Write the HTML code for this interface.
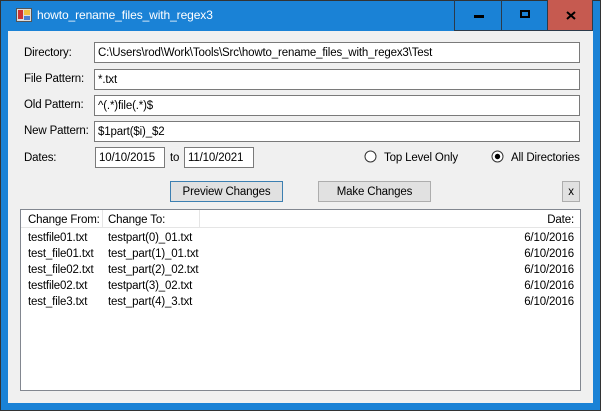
<!DOCTYPE html>
<html><head><style>
*{margin:0;padding:0;box-sizing:border-box}
body{width:601px;height:411px;background:#1a82d6;font-family:"Liberation Sans",Arial,sans-serif;font-size:11.5px;letter-spacing:-0.15px;color:#000;position:relative;overflow:hidden}
.frame{position:absolute;left:0;top:0;width:601px;height:411px;border:1px solid #333;}
.client{position:absolute;left:8px;top:31px;width:585px;height:372px;background:#f0f0f0}
.title{position:absolute;left:37px;top:8px;color:#fff;font-size:12px;letter-spacing:-0.1px}
.btn{position:absolute;top:0;height:31px;border:1px solid #2b3a4a;border-top:none}
.lbl{position:absolute;font-size:11.5px}
.tb{position:absolute;background:#fff;border:1px solid #7a7a7a;height:21px;padding:3px 3px 1px;font-size:11.5px;line-height:15px;white-space:nowrap}
.pb{position:absolute;height:21px;background:#e1e1e1;border:1px solid #adadad;text-align:center;line-height:20px}
.lv{position:absolute;left:20px;top:209px;width:561px;height:182px;background:#fff;border:1px solid #828790}
.row{position:absolute;left:7px;right:6px;height:17px;line-height:18px}
.row span{position:absolute}
</style></head><body>
<div class="frame"></div>
<svg style="position:absolute;left:16px;top:8px" width="16" height="14"><rect x="0.5" y="0.5" width="15" height="13" fill="#ddd" stroke="#555"/><rect x="2" y="2" width="5" height="9" fill="#c33"/><rect x="8" y="2" width="6" height="5" fill="#f0c040"/><rect x="8" y="8" width="6" height="4" fill="#4a7fd0"/></svg>
<div class="title">howto_rename_files_with_regex3</div>
<div class="btn" style="left:454px;width:48px"><div style="position:absolute;left:19px;top:15px;width:10px;height:3px;background:#000"></div></div>
<div class="btn" style="left:501px;width:47px"><div style="position:absolute;left:18px;top:10px;width:10px;height:8px;border:2px solid #000"></div></div>
<div class="btn" style="left:547px;width:46px;background:#c65a50"><svg style="position:absolute;left:18px;top:11px" width="10" height="9"><path d="M1 1L9 8M9 1L1 8" stroke="#000" stroke-width="2"/></svg></div>
<div class="client"></div>
<div class="lbl" style="left:24px;top:47px">Directory:</div>
<div class="tb" style="left:94px;top:42px;width:486px">C:\Users\rod\Work\Tools\Src\howto_rename_files_with_regex3\Test</div>
<div class="lbl" style="left:24px;top:73px">File Pattern:</div>
<div class="tb" style="left:94px;top:69px;width:486px">*.txt</div>
<div class="lbl" style="left:24px;top:99px">Old Pattern:</div>
<div class="tb" style="left:94px;top:95px;width:486px">^(.*)file(.*)$</div>
<div class="lbl" style="left:24px;top:125px">New Pattern:</div>
<div class="tb" style="left:94px;top:121px;width:486px">$1part($i)_$2</div>
<div class="lbl" style="left:24px;top:152px">Dates:</div>
<div class="tb" style="left:95px;top:147px;width:70px">10/10/2015</div>
<div class="lbl" style="left:170px;top:152px">to</div>
<div class="tb" style="left:184px;top:147px;width:70px">11/10/2021</div>
<svg style="position:absolute;left:364px;top:150px" width="13" height="13"><circle cx="6.5" cy="6.5" r="5.5" fill="#fff" stroke="#333"/></svg>
<div class="lbl" style="left:384px;top:152px">Top Level Only</div>
<svg style="position:absolute;left:491px;top:150px" width="13" height="13"><circle cx="6.5" cy="6.5" r="5.5" fill="#fff" stroke="#333"/><circle cx="6.5" cy="6.5" r="2.7" fill="#000"/></svg>
<div class="lbl" style="left:511px;top:152px">All Directories</div>
<div class="pb" style="left:170px;top:181px;width:113px;border-color:#3c7fb1">Preview Changes</div>
<div class="pb" style="left:318px;top:181px;width:113px">Make Changes</div>
<div class="pb" style="left:562px;top:181px;width:18px">x</div>
<div class="lv">
<div style="position:absolute;left:0;top:0;width:100%;height:18px;border-bottom:1px solid #e5e5e5"></div>
<div style="position:absolute;left:81px;top:0;width:1px;height:18px;background:#e5e5e5"></div>
<div style="position:absolute;left:178px;top:0;width:1px;height:18px;background:#e5e5e5"></div>
<div class="row" style="top:1px"><span style="left:0">Change From:</span><span style="left:80px">Change To:</span><span style="right:0">Date:</span></div>
<div class="row" style="top:19px"><span style="left:0">testfile01.txt</span><span style="left:80px">testpart(0)_01.txt</span><span style="right:0">6/10/2016</span></div>
<div class="row" style="top:35px"><span style="left:0">test_file01.txt</span><span style="left:80px">test_part(1)_01.txt</span><span style="right:0">6/10/2016</span></div>
<div class="row" style="top:51px"><span style="left:0">test_file02.txt</span><span style="left:80px">test_part(2)_02.txt</span><span style="right:0">6/10/2016</span></div>
<div class="row" style="top:67px"><span style="left:0">testfile02.txt</span><span style="left:80px">testpart(3)_02.txt</span><span style="right:0">6/10/2016</span></div>
<div class="row" style="top:83px"><span style="left:0">test_file3.txt</span><span style="left:80px">test_part(4)_3.txt</span><span style="right:0">6/10/2016</span></div>
</div>
</body></html>
